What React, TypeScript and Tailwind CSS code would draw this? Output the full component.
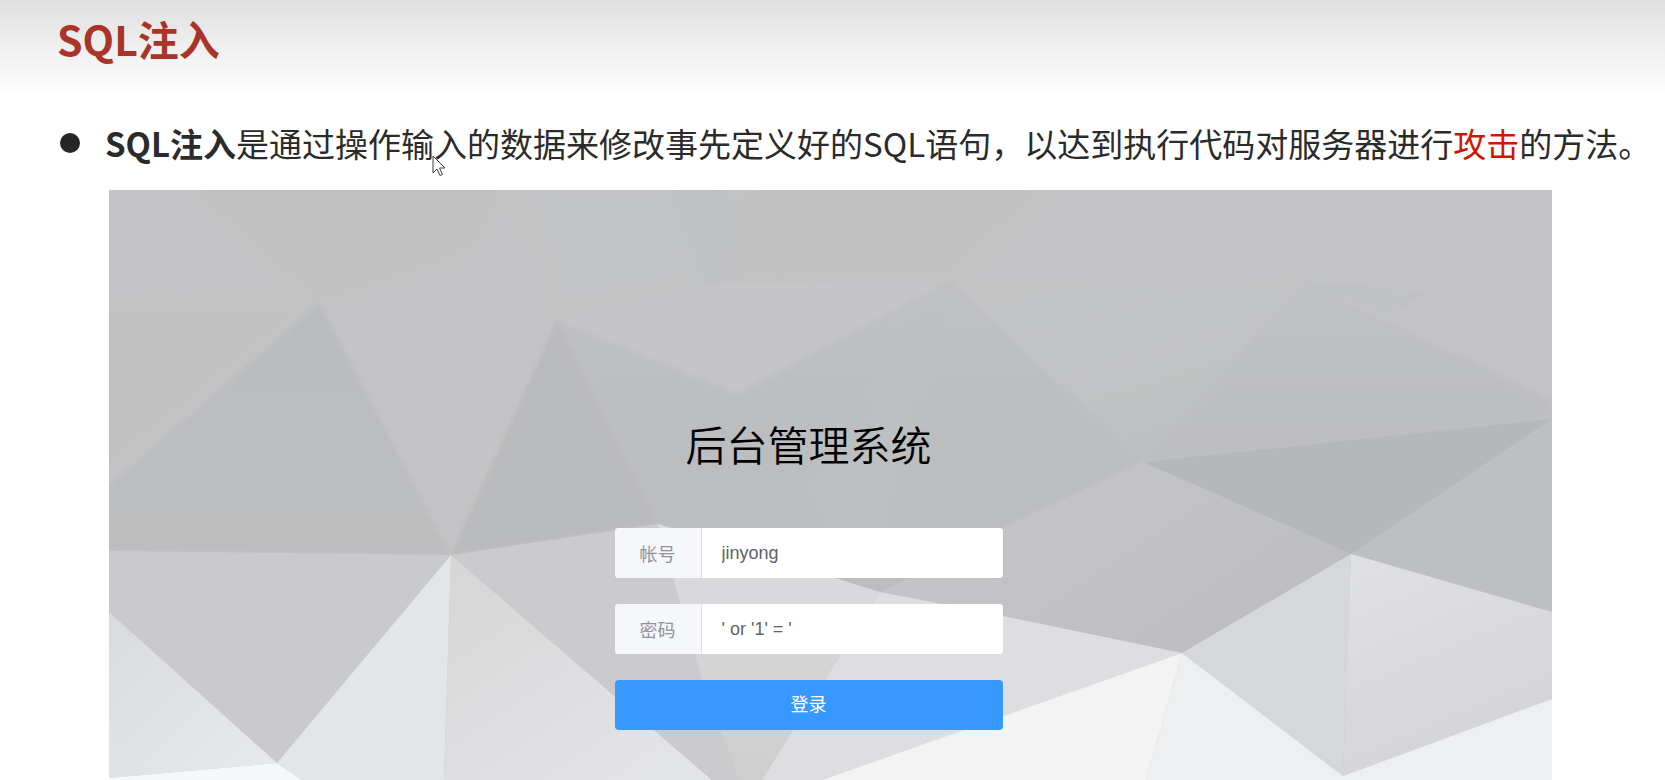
import type { ComponentProps } from 'react';

function Backdrop() {
  return (
    <svg
      className="absolute inset-0 h-full w-full"
      viewBox="109 190 1443 590"
      preserveAspectRatio="none"
      aria-hidden="true"
    >
      <defs>
        <linearGradient id="left-peak" x1="0" y1="0" x2="0" y2="1">
          <stop offset="0" stopColor="#b9bcbd" />
          <stop offset="1" stopColor="#bdbdbf" />
        </linearGradient>
        <linearGradient id="center" x1="0" y1="0" x2="0" y2="1">
          <stop offset="0" stopColor="#c0c1c2" />
          <stop offset="0.4" stopColor="#bcbec0" />
          <stop offset="1" stopColor="#bcbcbe" />
        </linearGradient>
        <linearGradient id="right-fold" x1="0" y1="0" x2="0.6" y2="1">
          <stop offset="0" stopColor="#c4c4c6" />
          <stop offset="0.5" stopColor="#c2c3c4" />
          <stop offset="1" stopColor="#bcbfc0" />
        </linearGradient>
        <linearGradient id="right-roof" x1="0" y1="0" x2="0" y2="1">
          <stop offset="0" stopColor="#c0c1c4" />
          <stop offset="1" stopColor="#bcbdc0" />
        </linearGradient>
        <linearGradient id="right-slab" x1="0" y1="0" x2="1" y2="0.6">
          <stop offset="0.2" stopColor="#c5c5c7" />
          <stop offset="1" stopColor="#bebec0" />
        </linearGradient>
        <linearGradient id="mid-shard" x1="0" y1="0" x2="0" y2="1">
          <stop offset="0" stopColor="#dedee0" />
          <stop offset="0.4" stopColor="#d6d6d8" />
          <stop offset="1" stopColor="#cececf" />
        </linearGradient>
        <linearGradient id="low-left" x1="0" y1="0" x2="0.8" y2="1">
          <stop offset="0" stopColor="#d5d5d6" />
          <stop offset="0.5" stopColor="#dddddf" />
          <stop offset="1" stopColor="#e3e4e6" />
        </linearGradient>
        <linearGradient id="edge-left" x1="0" y1="0" x2="1" y2="1">
          <stop offset="0" stopColor="#dadbdc" />
          <stop offset="1" stopColor="#e8e9ea" />
        </linearGradient>
        <linearGradient id="low-right" x1="0" y1="0" x2="0.4" y2="1">
          <stop offset="0" stopColor="#e0e1e3" />
          <stop offset="1" stopColor="#d4d4d6" />
        </linearGradient>
        <filter id="haze" x="-10%" y="-10%" width="120%" height="120%">
          <feGaussianBlur stdDeviation="8" />
        </filter>
        <filter id="soften" x="-5%" y="-5%" width="110%" height="110%">
          <feGaussianBlur stdDeviation="2" />
        </filter>
      </defs>

      <rect x="109" y="190" width="1443" height="590" fill="#c4c4c6" />

      <g filter="url(#haze)">
        <polygon points="180,180 319,302 470,250 510,180" fill="#c0c0c1" />
        <polygon points="90,306 319,302 90,486" fill="#c1c1c2" />
        <polygon points="510,180 557,320 710,285 720,180" fill="#c2c3c4" />
        <polygon points="660,180 735,180 722,285 705,285" fill="#bec1c2" />
        <polygon points="740,180 1060,180 950,280 720,284" fill="#c1c1c2" />
      </g>
      <g filter="url(#soften)">
        <polygon points="950,283 1303,278 1143,462" fill="url(#right-fold)" />
        <polygon points="1143,462 1303,280 1552,400 1552,430" fill="url(#right-roof)" />
        <polygon points="1303,280 1430,292 1386,316" fill="#bfc1c4" />
        <polygon points="557,320 737,393 950,280 1143,462 1002,529 880,592 658,524" fill="url(#center)" />
        <polygon points="557,320 737,393 950,280 720,284" fill="#c5c5c7" />
        <polygon points="319,302 451,555 109,551 100,493" fill="url(#left-peak)" />
        <polygon points="557,320 658,524 451,555" fill="#b9babb" />
      </g>
      <g filter="url(#haze)">
        <polygon points="945,300 895,340 860,440 800,480 835,550 890,530 925,360" fill="#bcc0c1" />
      </g>
      <polygon points="1143,462 1552,419 1351,554" fill="#b5b8b9" />
      <polygon points="1552,419 1552,612 1351,554" fill="#bdbfc0" />
      <polygon points="1143,462 1351,554 1182,653 1003,616 880,592 1002,529" fill="url(#right-slab)" />
      <polygon points="835,578 905,580 880,592" fill="#bdbdbf" />

      <polygon points="109,551 451,555 277,763 109,612" fill="#cacacc" />
      <polygon points="109,612 277,763 109,778" fill="url(#edge-left)" />
      <polygon points="109,778 277,763 302,780 109,780" fill="#f6f7f9" />
      <polygon points="277,763 451,555 444,780 302,780" fill="#e3e6e6" />
      <polygon points="451,555 712,780 444,780" fill="url(#low-left)" />
      <polygon points="451,555 658,524 835,578 762,780 712,780" fill="#cbcbcd" />
      <polygon points="658,524 835,578 880,592 762,780 740,780 702,680" fill="url(#mid-shard)" />
      <polygon points="880,592 1003,616 1182,653 822,780 762,780" fill="#dedee0" />
      <polygon points="1182,653 1351,554 1343,776" fill="#d6d7d8" />
      <polygon points="1351,554 1552,612 1552,699 1343,776" fill="url(#low-right)" />
      <polygon points="1182,653 1343,776 1552,699 1552,780 1146,780" fill="#edeff0" />
      <polygon points="1182,653 1146,780 822,780" fill="#f3f3f3" />
    </svg>
  );
}

function Pointer() {
  return (
    <svg
      className="absolute top-9 right-[-12px] h-[22px] w-[14px]"
      viewBox="0 0 14 22"
      aria-hidden="true"
    >
      <path
        d="M1 1v17l4-4 3 6.500 2.500-1-3-6.500H13z"
        fill="#fff"
        stroke="#3c3c3c"
        strokeWidth="1"
        strokeLinejoin="round"
      />
    </svg>
  );
}

function Field({ id, label, ...input }: ComponentProps<'input'> & { id: string; label: string }) {
  return (
    <div className="flex h-[50px] overflow-hidden rounded bg-white">
      <label
        htmlFor={id}
        className="flex w-[87px] items-center justify-center border-r border-[#dfe2e8] bg-[#f5f7fa] text-lg text-[#909399]"
      >
        {label}
      </label>
      <input
        id={id}
        type="text"
        className="min-w-0 flex-1 bg-white px-5 font-['Liberation_Sans',sans-serif] text-lg text-[#606266] outline-none"
        {...input}
      />
    </div>
  );
}

export default function App() {
  return (
    <main className="flex min-h-screen flex-col overflow-hidden bg-white font-['Noto_Sans_CJK_SC',sans-serif]">
      <header className="h-24 bg-linear-to-b from-[#e0e0e0] to-white px-[57px] pt-2">
        <h1 className="text-[41px] leading-[60px] font-bold text-[#a93428]">SQL注入</h1>
      </header>

      <ul className="px-[60px] pt-6">
        <li className="flex items-center gap-[25px] text-[33px] leading-[46px] whitespace-nowrap text-[#2b2b2b]">
          <span className="size-5 shrink-0 rounded-full bg-[#262626]" />
          <p>
            <b>SQL注入</b>是通过操作<span className="relative">输<Pointer /></span>
            入的数据来修改事先定义好的SQL语句，以达到执行代码对服务器进行
            <span className="text-[#cc1800]">攻击</span>的方法。
          </p>
        </li>
      </ul>

      <section className="relative mt-6 mr-[113px] ml-[109px] flex flex-1 flex-col items-center overflow-hidden pt-[222px] pr-[44px] pb-[50px]">
        <Backdrop />
        <form className="relative flex w-[388px] flex-col gap-[26px]" onSubmit={(e) => e.preventDefault()}>
          <h2 className="mb-7 text-center text-[41px] leading-[62px] font-[350] text-black">后台管理系统</h2>
          <Field id="account" label="帐号" defaultValue="jinyong" />
          <Field id="password" label="密码" defaultValue="' or '1' = '" />
          <button type="submit" className="h-[50px] rounded bg-[#3799ff] pb-1 text-lg text-white">
            登录
          </button>
        </form>
      </section>
    </main>
  );
}
